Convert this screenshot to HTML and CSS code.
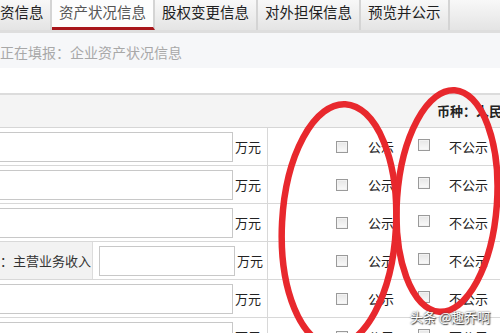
FILE: index.html
```html
<!DOCTYPE html>
<html lang="zh-CN">
<head>
    <meta charset="UTF-8">
    <title>企业资产状况信息</title>
    <link rel="stylesheet" href="styles.css">
</head>
<body>
    <div class="page">
        <div class="tabs">
            <div class="tab first">资信息</div>
            <div class="tab active">资产状况信息</div>
            <div class="tab">股权变更信息</div>
            <div class="tab">对外担保信息</div>
            <div class="tab">预览并公示</div>
        </div>

        <div class="notice">正在填报：企业资产状况信息</div>

        <div class="sheet">
            <div class="head-row">币种：人民币</div>

            <div class="row">
                <div class="field"><span class="box"></span><span class="unit">万元</span></div>
                <div class="choice">
                    <span class="check"></span><span class="yes">公示</span>
                    <span class="check up"></span><span class="no">不公示</span>
                </div>
            </div>
            <div class="row">
                <div class="field"><span class="box"></span><span class="unit">万元</span></div>
                <div class="choice">
                    <span class="check"></span><span class="yes">公示</span>
                    <span class="check up"></span><span class="no">不公示</span>
                </div>
            </div>
            <div class="row">
                <div class="field"><span class="box"></span><span class="unit">万元</span></div>
                <div class="choice">
                    <span class="check"></span><span class="yes">公示</span>
                    <span class="check up"></span><span class="no">不公示</span>
                </div>
            </div>
            <div class="row">
                <div class="field">
                    <span class="label">：主营业务收入</span>
                    <span class="box short"></span><span class="unit">万元</span>
                </div>
                <div class="choice">
                    <span class="check"></span><span class="yes">公示</span>
                    <span class="check up"></span><span class="no">不公示</span>
                </div>
            </div>
            <div class="row">
                <div class="field"><span class="box"></span><span class="unit">万元</span></div>
                <div class="choice">
                    <span class="check"></span><span class="yes">公示</span>
                    <span class="check up"></span><span class="no">不公示</span>
                </div>
            </div>
            <div class="row">
                <div class="field"><span class="box"></span><span class="unit">万元</span></div>
                <div class="choice">
                    <span class="check"></span><span class="yes">公示</span>
                    <span class="check up"></span><span class="no">不公示</span>
                </div>
            </div>
        </div>

        <!-- 红圈标注 -->
        <svg class="marks" width="500" height="333" viewBox="0 0 500 333">
            <ellipse cx="339" cy="225" rx="57" ry="121" transform="rotate(3 339 225)" />
            <ellipse cx="447" cy="201" rx="50" ry="111" transform="rotate(4 447 201)" />
        </svg>

        <div class="watermark">头条 @趣乔啊</div>
    </div>
</body>
</html>
```

FILE: styles.css
```css
body {
    margin: 0;
    font-family: "Noto Sans CJK SC", "Noto Sans", sans-serif;
    background-color: white;
    overflow: hidden;
}

.page {
    position: relative;
    width: 500px;
    height: 333px;
    overflow: hidden;
}

.tabs {
    display: flex;
    height: 30px;
    background: linear-gradient(#f8f8f8, #e4e4e4);
    border-bottom: 3px solid #dedede;
}

.tab {
    padding: 0 7px;
    font-size: 14.5px;
    line-height: 24px;
    color: #1e1e1e;
    border-right: 2px solid #d4d4d4;
    white-space: nowrap;
}

.tab.first {
    padding-left: 0;
    width: 43px;
}

.tab.active {
    background: #fdfdfd;
    color: #555;
    border-bottom: 3px solid #a8161b;
    height: 27px;
}

.notice {
    height: 35px;
    line-height: 38px;
    font-size: 14px;
    color: #a8a8a8;
    background-color: #f6f7f9;
    white-space: nowrap;
}

.sheet {
    margin-top: 25px;
    width: 540px;
    border-top: 2px solid #dcdcdc;
}

.head-row {
    height: 32px;
    line-height: 32px;
    padding-left: 437px;
    background-color: #f4f4f4;
    font-size: 13px;
    font-weight: bold;
    color: #222;
    border-bottom: 1px solid #d6d6d6;
    white-space: nowrap;
}

.row {
    display: flex;
    height: 37px;
    border-bottom: 1px solid #d8d8d8;
}

.field {
    display: flex;
    align-items: center;
    width: 267px;
    border-right: 1px solid #d8d8d8;
}

.label {
    display: flex;
    align-items: center;
    align-self: stretch;
    width: 92px;
    font-size: 13px;
    color: #333;
    background-color: #f2f2f2;
    border-right: 1px solid #dcdcdc;
    margin-right: 6px;
    white-space: nowrap;
}

.box {
    width: 232px;
    height: 28px;
    border: 1px solid #c8c8c8;
    border-left: none;
    background: white;
}

.box.short {
    width: 134px;
    border-left: 1px solid #c8c8c8;
}

.unit {
    margin-left: 2px;
    font-size: 13px;
    color: #222;
    white-space: nowrap;
}

.choice {
    display: flex;
    align-items: center;
    padding-left: 68px;
    font-size: 13px;
    color: #222;
    white-space: nowrap;
}

.check {
    width: 10px;
    height: 10px;
    border: 1px solid #9a9a9a;
    background: linear-gradient(#e6e6e6, #fafafa);
    box-shadow: inset 0 0 0 1px #f2f2f2;
}

.check.up {
    margin-top: -4px;
}

.yes {
    margin-left: 20px;
    margin-right: 24px;
}

.no {
    margin-left: 19px;
}

.marks {
    position: absolute;
    left: 0;
    top: 0;
}

.marks ellipse {
    fill: none;
    stroke: #e8282d;
    stroke-width: 6.5;
}

.watermark {
    position: absolute;
    left: 410px;
    top: 307px;
    font-size: 13px;
    color: white;
    text-shadow: 0 0 2px #333, 1px 1px 1px #444;
    white-space: nowrap;
}
```
